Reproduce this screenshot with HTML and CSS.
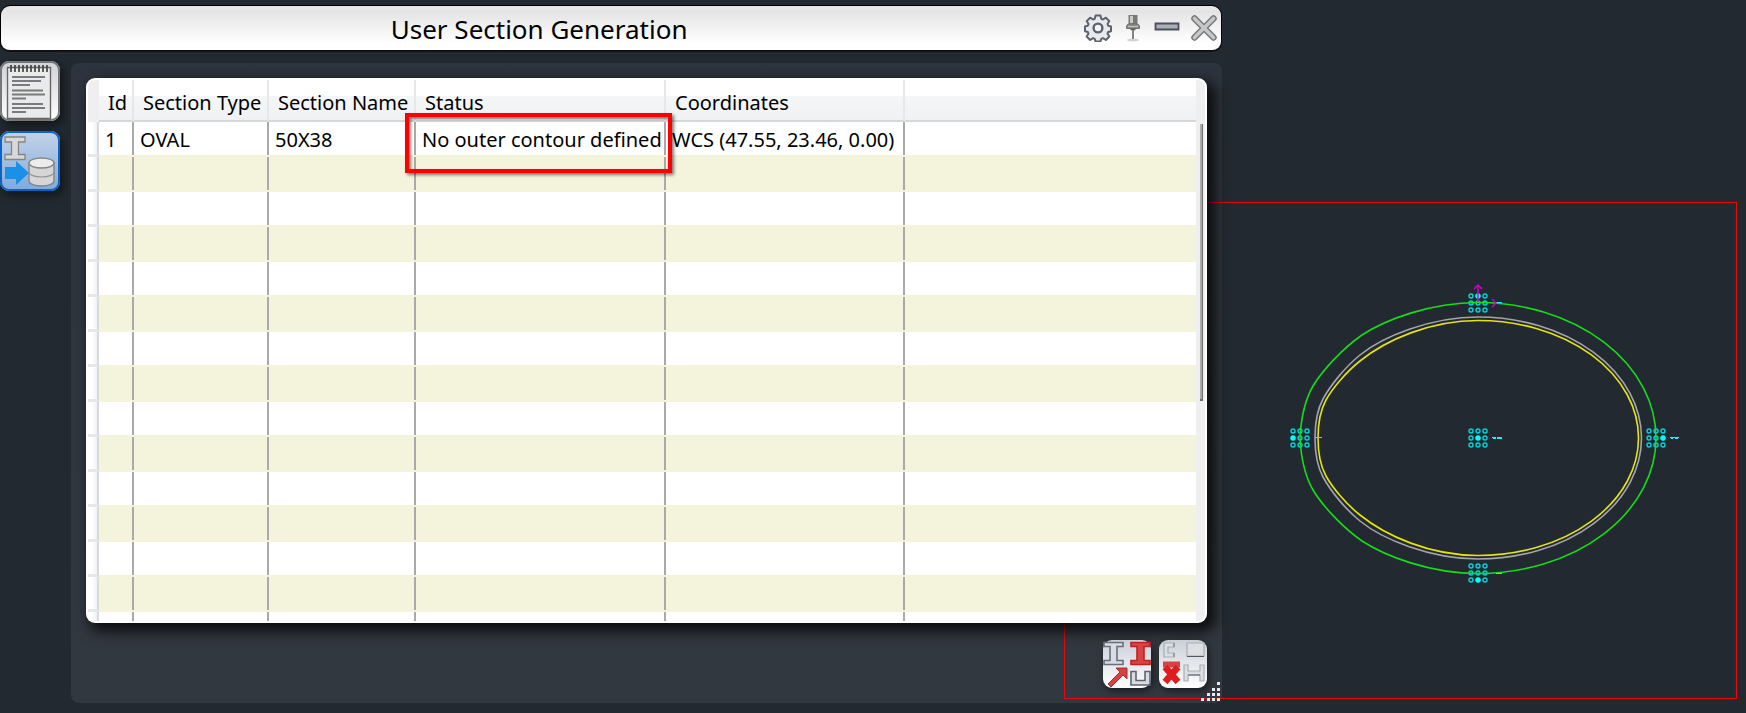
FILE: index.html
```
<!DOCTYPE html>
<html lang="en">
<head>
<meta charset="UTF-8" />
<title>User Section Generation</title>
<link rel="stylesheet" href="styles.css">
</head>
<body>

<main class="workspace">

  <!-- CAD drawing -->
  <svg class="drawing" viewBox="0 0 1746 713" preserveAspectRatio="xMinYMin meet" aria-hidden="true">
    <defs>
      <g id="snap" fill="none" stroke="#00d4d8" stroke-width="1.4">
        <circle cx="-7" cy="-7" r="2" /><circle cx="0" cy="-7" r="2" /><circle cx="7" cy="-7" r="2" />
        <circle cx="-7" cy="0" r="2" /><circle cx="0" cy="0" r="2" /><circle cx="7" cy="0" r="2" />
        <circle cx="-7" cy="7" r="2" /><circle cx="0" cy="7" r="2" /><circle cx="7" cy="7" r="2" />
      </g>
      <path id="outer" d="M1300 438C1301 418 1305 400 1313 386C1322 371 1342 349 1362 335C1385 320 1430 302.5 1478 302.5A178 135.5 0 0 1 1656 438" />
      <path id="middle" d="M1315 438C1315 424 1317 410 1323 399C1330 386 1345 367 1360 355C1382 337 1430 317 1478 317A163.5 121 0 0 1 1641.500 438" />
      <path id="inner" d="M1318 438C1318 424 1320 411 1326 400C1332 389 1346 372 1360 361C1386 340 1430 320.500 1478 320.500A160.500 117.500 0 0 1 1638.500 438" />
    </defs>
    <rect x="1064.5" y="202.5" width="672" height="496" fill="none" stroke="#e80808" stroke-width="1.2" />
    <use href="#snap" x="1478" y="303" />
    <use href="#snap" x="1300" y="438" />
    <use href="#snap" x="1478" y="438" />
    <use href="#snap" x="1656" y="438" />
    <use href="#snap" x="1478" y="573" />
    <g fill="none" stroke-width="1.6">
      <g stroke="#18dc18"><use href="#outer" /><use href="#outer" transform="matrix(1 0 0 -1 0 876)" /></g>
      <g stroke="#a2a5a9"><use href="#middle" /><use href="#middle" transform="matrix(1 0 0 -1 0 876)" /></g>
      <g stroke="#e4e410"><use href="#inner" /><use href="#inner" transform="matrix(1 0 0 -1 0 876)" /></g>
    </g>
    <g fill="#00ffff">
      <circle cx="1478" cy="296" r="2.500" /><circle cx="1293" cy="438" r="2.500" /><circle cx="1478" cy="438" r="2.500" />
      <circle cx="1663" cy="438" r="2.500" /><circle cx="1478" cy="580" r="2.500" />
      <path d="M1495 302h7v1h-7zM1315 437h3v1h-3zM1319 437h3v1h-3zM1492 437h4v1h-4zM1493 438h3v1h-3zM1497 437h5v2h-5zM1670 437h4v1h-4zM1674 437h5v1h-5zM1671 438h2v1h-2zM1675 438h3v1h-3zM1496 573h6v1h-6z" />
    </g>
    <path d="M1478 302v-17M1474 289l4-4 4 4M1492 299l4 4-4 4" fill="none" stroke="#cc00cc" stroke-width="1.5" />
  </svg>

  <section class="window">
    <header class="titlebar">
      <h1 class="title">User Section Generation</h1>
      <div class="window-buttons">
        <button class="win-btn" type="button" aria-label="Settings">
          <svg width="28" height="28" viewBox="0 0 28 28">
            <path d="M11.6 1.500h4.800l.9 3.300 1.600.7 3-1.800 3.400 3.400-1.800 3 .7 1.600 2.800.7v4.800l-2.800.8-.7 1.600 1.800 3-3.400 3.400-3-1.800-1.600.7-.9 2.600h-4.800l-.9-2.600-1.600-.7-3 1.800-3.400-3.400 1.800-3-.7-1.600-2.800-.8v-4.800l2.800-.7.7-1.600-1.800-3 3.400-3.400 3 1.800 1.600-.7z" fill="#e8e9ec" stroke="#5b626c" stroke-width="2" stroke-linejoin="round" />
            <circle cx="14" cy="14" r="4.400" fill="#f4f4f4" stroke="#5b626c" stroke-width="2.400" />
          </svg>
        </button>
        <button class="win-btn win-btn-pin" type="button" aria-label="Pin">
          <svg width="14" height="28" viewBox="0 0 14 28">
            <ellipse cx="7" cy="26" rx="6" ry="1.500" fill="#d2d2d2" />
            <path d="M2.500 1h9v9h-9z" fill="#777975" /><path d="M4 2h3v7H4z" fill="#c9cbc7" />
            <path d="M2 10h10l1.500 2v2.500H.5V12z" fill="#8b8d89" stroke="#70726f" />
            <path d="M2 12.500h10" stroke="#c4c6c2" />
            <path d="M4.500 15.500h5M7 16v9" stroke="#666" stroke-width="1.600" />
          </svg>
        </button>
        <button class="win-btn" type="button" aria-label="Minimize">
          <svg width="26" height="28" viewBox="0 0 26 28">
            <path d="M1.500 9.500h23v6h-23z" fill="#a9afb8" stroke="#4c4f55" stroke-width="1.800" />
          </svg>
        </button>
        <button class="win-btn" type="button" aria-label="Close">
          <svg width="28" height="28" viewBox="0 0 28 28" stroke-linecap="round">
            <path d="M4.500 4.500l19 19M23.500 4.500l-19 19" stroke="#77797b" stroke-width="6.500" />
            <path d="M4.500 4.500l19 19M23.500 4.500l-19 19" stroke="#c6c7c8" stroke-width="3.600" />
          </svg>
        </button>
      </div>
    </header>

    <div class="content">
      <nav class="tabs">
        <button class="tab" type="button" aria-label="Report">
          <svg viewBox="0 0 60 60">
            <path d="M7.500 6.500h43v51h-43z" fill="#e9eaeb" stroke="#666" stroke-width="1.400" />
            <path d="M11 4v7M15 4v7M19 4v7M23 4v7M27 4v7M31 4v7M35 4v7M39 4v7M43 4v7M47 4v7" stroke="#444" stroke-width="1.700" />
            <path d="M12 16h33M12 20h29M12 24h18M12 29.500h31M12 33.500h33M12 37.500h14M12 43h31M12 47h33M12 51h14" stroke="#7b7b7b" stroke-width="1.800" />
          </svg>
        </button>
        <button class="tab tab-active" type="button" aria-label="Save section to database">
          <svg viewBox="0 0 60 60">
            <path d="M5 6h20v5h-6.500v12.500H25v5H5v-5h6.500V11H5z" fill="#d9d9d9" stroke="#858585" stroke-width="1.300" />
            <path d="M5 36h11v-6l13 12-13 12v-6H5z" fill="#1a90e8" />
            <path d="M29 32v18c0 3 6 5 12.500 5S54 53 54 50V32z" fill="#d6d6d6" stroke="#858585" stroke-width="1.400" />
            <path d="M29 41c0 3 6 5 12.500 5S54 44 54 41" fill="none" stroke="#929292" stroke-width="1.200" />
            <ellipse cx="41.500" cy="32" rx="12.500" ry="5" fill="#ececec" stroke="#858585" stroke-width="1.400" />
          </svg>
        </button>
      </nav>

      <div class="panel">
        <div class="grid-box">
          <div class="grid-view">
            <table class="grid">
              <colgroup>
                <col class="col-head"><col class="col-id"><col class="col-type"><col class="col-name"><col class="col-status"><col class="col-coords"><col>
              </colgroup>
              <thead>
                <tr><td class="corner"></td><th>Id</th><th>Section Type</th><th>Section Name</th><th>Status</th><th>Coordinates</th><td class="filler"></td></tr>
              </thead>
              <tbody>
                <tr><td class="row-head"></td><td>1</td><td>OVAL</td><td>50X38</td><td class="marked">No outer contour defined</td><td>WCS (47.55, 23.46, 0.00)</td><td></td></tr>
                <tr><td class="row-head"></td><td></td><td></td><td></td><td></td><td></td><td></td></tr>
                <tr><td class="row-head"></td><td></td><td></td><td></td><td></td><td></td><td></td></tr>
                <tr><td class="row-head"></td><td></td><td></td><td></td><td></td><td></td><td></td></tr>
                <tr><td class="row-head"></td><td></td><td></td><td></td><td></td><td></td><td></td></tr>
                <tr><td class="row-head"></td><td></td><td></td><td></td><td></td><td></td><td></td></tr>
                <tr><td class="row-head"></td><td></td><td></td><td></td><td></td><td></td><td></td></tr>
                <tr><td class="row-head"></td><td></td><td></td><td></td><td></td><td></td><td></td></tr>
                <tr><td class="row-head"></td><td></td><td></td><td></td><td></td><td></td><td></td></tr>
                <tr><td class="row-head"></td><td></td><td></td><td></td><td></td><td></td><td></td></tr>
                <tr><td class="row-head"></td><td></td><td></td><td></td><td></td><td></td><td></td></tr>
                <tr><td class="row-head"></td><td></td><td></td><td></td><td></td><td></td><td></td></tr>
                <tr><td class="row-head"></td><td></td><td></td><td></td><td></td><td></td><td></td></tr>
                <tr><td class="row-head"></td><td></td><td></td><td></td><td></td><td></td><td></td></tr>
                <tr class="last"><td class="row-head"></td><td></td><td></td><td></td><td></td><td></td><td></td></tr>
              </tbody>
            </table>
            <div class="scrollbar"><div class="thumb"></div></div>
          </div>
        </div>

        <footer class="actions">
          <button class="action" type="button" aria-label="Select sections">
            <svg viewBox="0 0 48 48">
              <path d="M1 2.500h19v4h-6v14h6v4H1v-4h6v-14H1z" fill="#d8dce3" stroke="#69707d" stroke-width="1.600" />
              <path d="M28 2.500h19v4h-6v14h6v4H28v-4h6v-14h-6z" fill="#d84444" stroke="#c42020" stroke-width="1.600" />
              <path d="M5 44l12-12-4-4h11v11l-4-4L8 47z" fill="#d94040" stroke="#a83030" />
              <path d="M28 31.500h5v9h9v-9h5v13.500H28z" fill="#d8dce3" stroke="#5c6472" stroke-width="1.600" />
            </svg>
          </button>
          <button class="action" type="button" aria-label="Delete sections">
            <svg viewBox="0 0 48 48">
              <g fill="#dcdfe2" stroke="#a9adb2" stroke-width="1.200">
                <path d="M5 3h10v4H9v6h6v4H5z" />
                <path d="M28 3h17v13H28z" />
                <path d="M25 25h4v6h12v-6h4v16h-4v-6H29v6h-4z" />
              </g>
              <path d="M28 16.500h17M29 35h12" stroke="#525966" stroke-width="1.200" />
              <path d="M15 3v4M15 13v4" stroke="#777b82" />
              <path d="M4 21.500h17v6H4z" fill="#d54444" />
              <path d="M6 27l13 15M19 27L6 42" stroke="#df1d1d" stroke-width="6.500" />
            </svg>
          </button>
        </footer>
        <svg class="grip" viewBox="0 0 20 20" aria-hidden="true">
          <path d="M16 0h3v3h-3zM11 6h3v3h-3zM16 6h3v3h-3zM6 11h3v3H6zM11 11h3v3h-3zM16 11h3v3h-3zM0 16h3v3H0zM6 16h3v3H6zM11 16h3v3h-3zM16 16h3v3h-3z" fill="#e9eaf0" />
        </svg>
      </div>
    </div>
  </section>

</main>

</body>
</html>
```
FILE: styles.css
```
* {
  box-sizing: border-box;
}
body {
  margin: 0;
  background: #222930;
  font-family: "Noto Sans", "Open Sans", sans-serif;
  color: #000;
}
button {
  border: 0;
  padding: 0;
  background: none;
  cursor: pointer;
}
button svg {
  display: block;
}
.workspace {
  position: relative;
  min-height: 100vh;
}
.drawing {
  position: absolute;
  top: 0;
  left: 0;
  width: 100%;
  z-index: 1;
  pointer-events: none;
}
.window {
  width: 70%;
  min-width: 1000px;
  padding-top: 5px;
}

/* title bar */
.titlebar {
  display: flex;
  align-items: center;
  height: 47px;
  padding: 0 3px 0 1px;
  border: 1px solid #000;
  border-bottom: 2px solid #111;
  border-radius: 10px;
  background: linear-gradient(#e5e5e5 15%, #fff 85%);
}
.title {
  flex: 1;
  margin: 0;
  padding: 2px 8px 0 0;
  font-size: 26px;
  line-height: 36px;
  font-weight: normal;
  text-align: center;
}
.window-buttons {
  display: flex;
  gap: 10px;
}
.win-btn-pin {
  padding: 0 4px;
}

/* left tabs + panel */
.content {
  display: flex;
  gap: 11px;
  margin-top: 9px;
}
.tabs {
  display: flex;
  flex-direction: column;
  gap: 10px;
  width: 60px;
}
.tab {
  height: 60px;
  border-radius: 9px;
  background: linear-gradient(#cfd2d8, #fff);
  box-shadow: inset 0 0 0 2px #777, 3px 4px 8px rgba(0, 0, 0, 0.5);
}
.tab-active {
  background: linear-gradient(#c4d4e8, #7eaadb);
  box-shadow: inset 0 0 0 2px #0d62c5, 3px 4px 8px rgba(0, 0, 0, 0.5);
}
.panel {
  position: relative;
  flex: 1;
  margin-top: 2px;
  padding: 15px;
  border-radius: 8px;
  background: linear-gradient(#2d343d, #32383f);
}
.grid-box {
  position: relative;
  z-index: 2;
  padding: 2px;
  border-radius: 9px;
  background: #fff;
  box-shadow: 6px 6px 14px 2px rgba(0, 0, 0, 0.8);
}
.grid-view {
  display: flex;
  overflow: hidden;
  border-radius: 7px;
}

/* data grid */
.grid {
  flex: 1;
  table-layout: fixed;
  border-collapse: separate;
  border-spacing: 0;
  font-size: 20px;
  line-height: 28px;
}
.col-head { width: 11px; }
.col-id { width: 35px; }
.col-type { width: 135px; }
.col-name { width: 147px; }
.col-status { width: 250px; }
.col-coords { width: 239px; }
.grid th,
.grid td {
  padding: 0 0 0 6px;
  text-align: left;
  white-space: nowrap;
}
.grid thead th,
.grid thead .filler {
  height: 42px;
  padding: 5px 0 0 9px;
  border-bottom: 2px solid #d5d8d8;
  background: linear-gradient(#fff 40%, #f4f6f8 40%, #f0f1f2);
  font-weight: normal;
}
.grid thead th {
  border-right: 2px solid #e6e7e8;
}
.grid .corner {
  background: #efefef;
}
.grid tbody td {
  height: 35px;
  padding-top: 2px;
  border-bottom: 2px solid #f4f4dc;
  background: linear-gradient(#a9a9a9, #a9a9a9) right / 2px 100% no-repeat padding-box;
}
.grid tbody td:last-child {
  background: none;
}
.grid tbody tr:nth-child(even) {
  background: #f4f4dc;
}
.grid tbody .row-head {
  padding: 0;
  border-right: 2px solid #d8d9db;
  border-bottom: 3px solid #e6e7e8;
  background: linear-gradient(90deg, #fff 40%, #eff1f4);
}
.grid tbody .last td {
  height: 9px;
  border-bottom: 0;
}
.marked {
  position: relative;
}
.marked::after {
  content: "";
  position: absolute;
  z-index: 1;
  top: -9px;
  right: -6px;
  bottom: -18px;
  left: -11px;
  border: 4px solid #f00;
  box-shadow: 2px 2px 3px rgba(0, 0, 0, 0.5), inset 2px 2px 3px rgba(0, 0, 0, 0.5);
}
.scrollbar {
  width: 9px;
  padding: 44px 2px 0 4px;
  background: #efefef;
}
.thumb {
  height: 277px;
  border: solid #6d6d6d;
  border-width: 0 1px 2px 0;
  background: #aaa;
}

/* bottom buttons */
.actions {
  display: flex;
  justify-content: flex-end;
  gap: 8px;
  margin-top: 17px;
}
.action {
  position: relative;
  z-index: 2;
  width: 48px;
  height: 48px;
  border-radius: 9px;
  background: linear-gradient(#cbd0d8, #fff);
  box-shadow: 2px 3px 7px rgba(0, 0, 0, 0.5);
}
.grip {
  position: absolute;
  z-index: 2;
  right: 1px;
  bottom: 1px;
  width: 20px;
  height: 20px;
}
```
